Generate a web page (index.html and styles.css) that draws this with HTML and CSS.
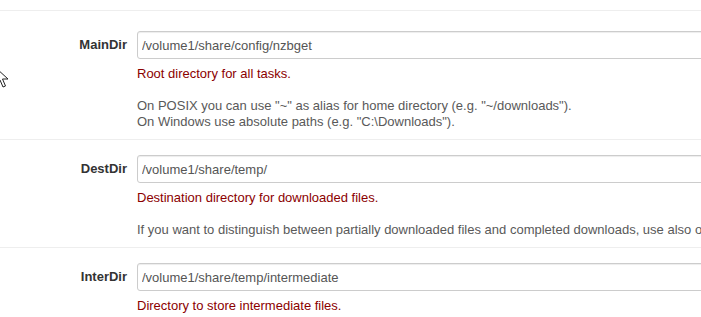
FILE: index.html
```html
<!DOCTYPE html>
<html>
<head>
<meta charset="utf-8">
<link rel="stylesheet" href="styles.css">
</head>
<body>
<div class="page">
  <div class="top-rule"></div>
  <div class="group first">
    <label class="label">MainDir</label>
    <div class="controls">
      <input class="field" type="text" value="/volume1/share/config/nzbget">
      <p class="help"><span class="red">Root directory for all tasks.</span><br><br>On POSIX you can use "~" as alias for home directory (e.g. "~/downloads").<br>On Windows use absolute paths (e.g. "C:\Downloads").</p>
    </div>
  </div>
  <div class="group">
    <label class="label">DestDir</label>
    <div class="controls">
      <input class="field" type="text" value="/volume1/share/temp/">
      <p class="help"><span class="red">Destination directory for downloaded files.</span><br><br>If you want to distinguish between partially downloaded files and completed downloads, use also option InterDir.</p>
    </div>
  </div>
  <div class="group">
    <label class="label">InterDir</label>
    <div class="controls">
      <input class="field" type="text" value="/volume1/share/temp/intermediate">
      <p class="help"><span class="red">Directory to store intermediate files.</span></p>
    </div>
  </div>
</div>
<svg class="cursor" width="14" height="22" viewBox="0 0 14 22"><path d="M1 1 L1 17 L5 13 L8 20 L10.5 19 L7.5 12 L13 12 Z" fill="#fff" stroke="#222" stroke-width="1" stroke-linejoin="miter"/></svg>
</body>
</html>
```
FILE: styles.css
```css
html, body {
  margin: 0;
  padding: 0;
  background: #fff;
  overflow: hidden;
}
body {
  width: 701px;
  height: 317px;
  position: relative;
  font-family: "Liberation Sans", Arial, sans-serif;
  font-size: 13px;
  line-height: 16px;
  color: #333;
}
.page {
  width: 1100px;
}
.top-rule {
  height: 10px;
  border-bottom: 1px solid #eee;
}
.group {
  display: grid;
  grid-template-columns: 127px 1fr;
  column-gap: 10px;
  padding: 15px 0 9px;
  border-bottom: 1px solid #eee;
}
.group.first {
  padding-top: 20px;
}
.label {
  font-weight: bold;
  text-align: right;
  line-height: 28px;
  color: #333;
}
.controls {
  min-width: 0;
}
.field {
  display: block;
  box-sizing: border-box;
  width: 800px;
  height: 28px;
  margin: 0;
  padding: 0 4px;
  border: 1px solid #ccc;
  border-radius: 3px;
  box-shadow: inset 0 1px 1px rgba(0,0,0,0.075);
  font-family: "Liberation Sans", Arial, sans-serif;
  font-size: 13px;
  color: #555;
  background: #fff;
}
.help {
  margin: 7px 0 0;
  color: #595959;
  white-space: nowrap;
}
.red {
  color: #8b0000;
}
.cursor {
  position: absolute;
  left: -5px;
  top: 67px;
}
```
